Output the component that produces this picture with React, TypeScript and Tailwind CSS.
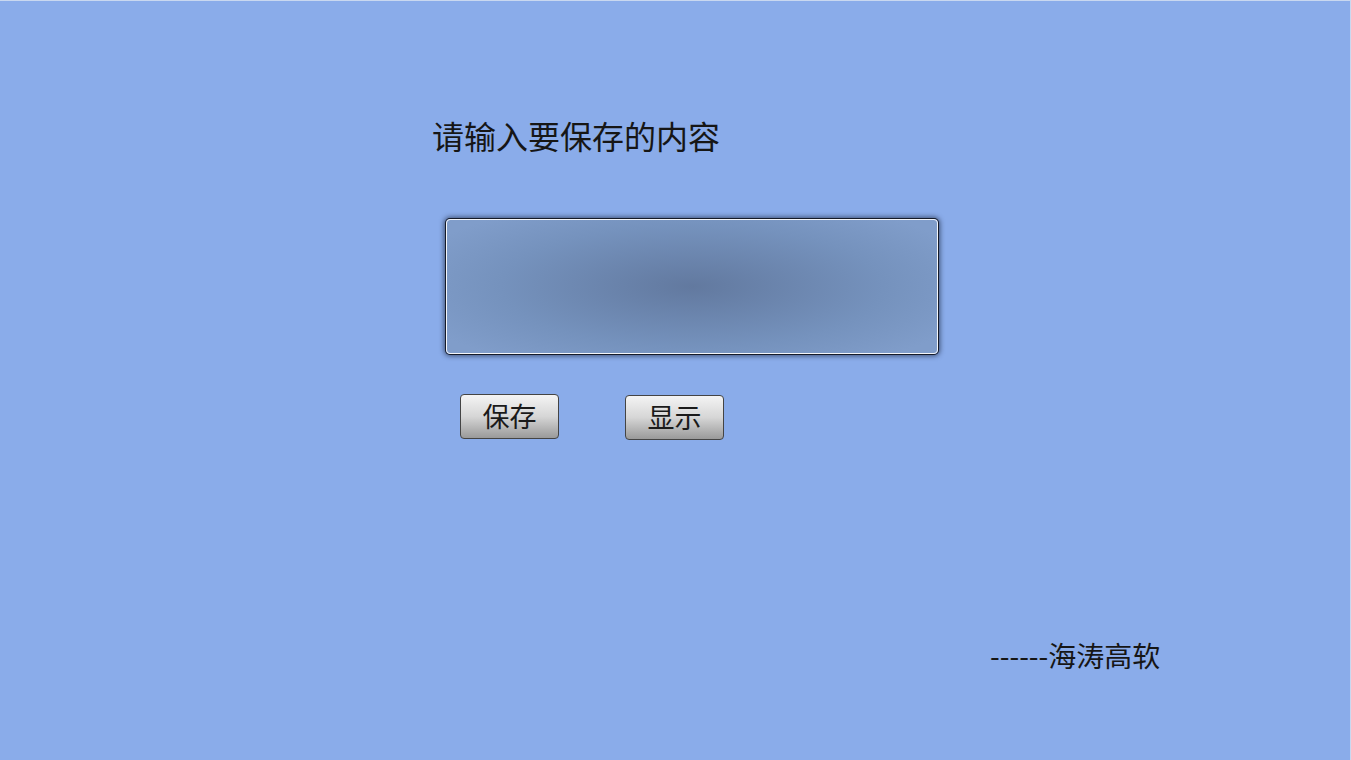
import React from "react";

const font = { fontFamily: '"Noto Sans CJK SC", "Noto Sans", sans-serif' };

const App = () => {
  return (
    <div
      className="w-full h-[760px] bg-[#8aacea] border-t border-[#c9d8f0] border-r overflow-hidden flex flex-col"
      style={font}
    >
      <div className="pl-[432px] pt-[112px] text-[32px] leading-[44px] text-[#161616]">
        请输入要保存的内容
      </div>

      <div className="ml-[446px] mt-[62px] w-[492px] h-[135px] rounded-[4px] border border-[#f4f6fa] bg-[radial-gradient(ellipse_60%_70%_at_center,#62799f_0%,#7592bd_65%,#809dca_100%)] shadow-[0_0_0_1px_#151b29,0_0_5px_2px_rgba(15,22,40,0.6)]"></div>

      <div className="flex gap-[66px] ml-[460px] mt-[40px]">
        <button className="w-[99px] h-[45px] rounded-[4px] border border-[#444] bg-gradient-to-b from-[#f4f4f4] via-[#d6d6d6] to-[#9a9a9a] text-[27px] leading-none text-[#1a1a1a] pb-[2px]">
          保存
        </button>
        <button className="w-[99px] h-[45px] mt-[1px] rounded-[4px] border border-[#444] bg-gradient-to-b from-[#f4f4f4] via-[#d6d6d6] to-[#9a9a9a] text-[27px] leading-none text-[#1a1a1a] pb-[2px]">
          显示
        </button>
      </div>

      <div className="ml-[990px] mt-[195px] text-[28px] leading-[40px] text-[#161616]">
        ------海涛高软
      </div>
    </div>
  );
};

export default App;
